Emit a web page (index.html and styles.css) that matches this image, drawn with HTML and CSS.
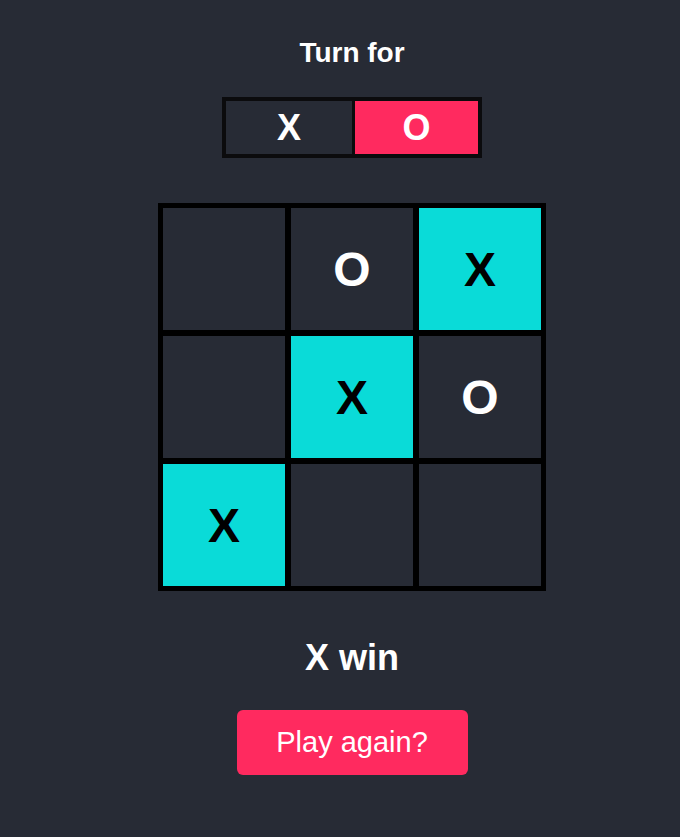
FILE: index.html
```html
<!DOCTYPE html>
<html>
<head>
<meta charset="utf-8">
<link rel="stylesheet" href="styles.css">
</head>
<body>
<main class="app">
  <h2 class="title">Turn for</h2>
  <div class="turn">
    <div class="turn-cell turn-x">X</div>
    <div class="turn-cell turn-o">O</div>
  </div>
  <div class="board">
    <div class="cell"></div>
    <div class="cell">O</div>
    <div class="cell win">X</div>
    <div class="cell"></div>
    <div class="cell win">X</div>
    <div class="cell">O</div>
    <div class="cell win">X</div>
    <div class="cell"></div>
    <div class="cell"></div>
  </div>
  <h2 class="result">X win</h2>
  <button class="again">Play again?</button>
</main>
</body>
</html>
```
FILE: styles.css
```css
html, body {
  margin: 0;
  padding: 0;
  background: #272b35;
  height: 100%;
}
body {
  font-family: "Liberation Sans", Arial, sans-serif;
  color: #ffffff;
}
.app {
  display: flex;
  flex-direction: column;
  align-items: center;
  padding-top: 37px;
  padding-left: 24px;
}
.title {
  margin: 0;
  font-size: 28px;
  line-height: 32px;
  font-weight: bold;
}
.turn {
  margin-top: 28px;
  display: flex;
  border: 4px solid #0b0b0d;
  height: 53px;
}
.turn-cell {
  display: flex;
  align-items: center;
  justify-content: center;
  font-size: 36px;
  font-weight: bold;
}
.turn-x {
  width: 126px;
  border-right: 3px solid #0b0b0d;
}
.turn-o {
  width: 123px;
  background: #ff2a5f;
}
.board {
  margin-top: 45px;
  display: grid;
  grid-template-columns: repeat(3, 128px);
  grid-template-rows: repeat(3, 128px);
  border: 2px solid #000;
}
.cell {
  box-sizing: border-box;
  border: 3px solid #000;
  display: flex;
  align-items: center;
  justify-content: center;
  font-size: 48px;
  font-weight: bold;
  color: #ffffff;
}
.cell.win {
  background: #0adbd8;
  color: #000;
}
.result {
  margin: 46px 0 0;
  font-size: 36px;
  line-height: 42px;
  font-weight: bold;
}
.again {
  margin-top: 31px;
  width: 231px;
  height: 65px;
  border: none;
  border-radius: 6px;
  background: #ff2a5f;
  color: #fff;
  font-family: "Liberation Sans", Arial, sans-serif;
  font-size: 29px;
  padding: 0;
}
```
